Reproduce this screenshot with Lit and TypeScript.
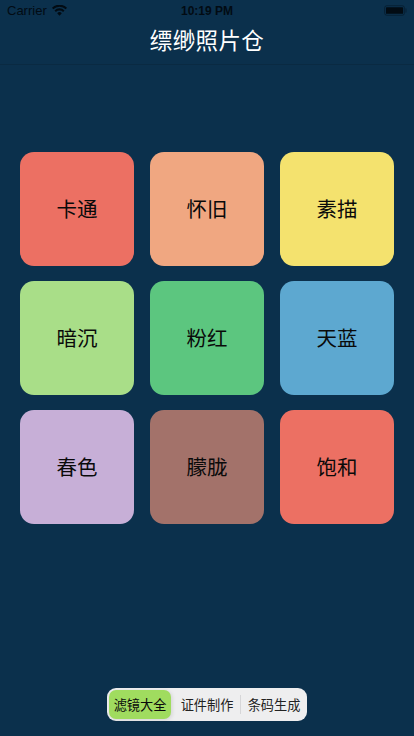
import { LitElement, html, css, svg } from "lit";
import { customElement } from "lit/decorators.js";

const tiles: [string, string][] = [
  ["卡通", "#ec7063"], ["怀旧", "#f0a781"], ["素描", "#f4e26e"],
  ["暗沉", "#a9de88"], ["粉红", "#5cc67f"], ["天蓝", "#5da8d0"],
  ["春色", "#c7afd7"], ["朦胧", "#a3726a"], ["饱和", "#ec7063"],
];

@customElement("app-root")
export class AppRoot extends LitElement {
  static styles = css`
    :host {
      display: flex; flex-direction: column; width: 414px; height: 736px;
      background: #0b304c; overflow: hidden;
      font-family: "Liberation Sans", "Noto Sans CJK SC", sans-serif;
    }
    .status { height: 20px; box-sizing: border-box; padding: 1px 7px 0; display: grid; grid-template-columns: 1fr auto 1fr; align-items: center; color: #020b13; font-size: 13px; }
    .left { display: flex; align-items: center; gap: 5px; }
    .time { font-weight: 700; font-size: 12px; }
    .right { display: flex; justify-content: flex-end; }
    .nav { height: 45px; box-sizing: border-box; display: flex; align-items: center; justify-content: center; border-bottom: 1px solid #0a2a42; color: #fff; font-size: 22.5px; letter-spacing: 0.4px; padding-bottom: 7px; }
    .grid { margin: 87px 20px 0; display: grid; grid-template-columns: repeat(3, 114px); gap: 15px 16px; }
    .tile { height: 114px; box-sizing: border-box; padding-bottom: 2px; border-radius: 14px; display: flex; align-items: center; justify-content: center; color: #0a0a0a; font-size: 20.5px; }
    .spacer { flex: 1; }
    .seg { align-self: center; margin-bottom: 15px; width: 200px; height: 33px; box-sizing: border-box; background: #eeeeef; border-radius: 9px; padding: 2px; display: flex; align-items: stretch; font-size: 13.2px; color: #222; }
    .seg div { display: flex; align-items: center; justify-content: center; white-space: nowrap; }
    .seg .on { width: 62px; background: #a0dc5f; border-radius: 7px; color: #0a0a0a; box-shadow: 1px 1px 4px rgba(0,0,0,.12); }
    .seg .mid { width: 69px; padding-left: 3px; box-sizing: border-box; }
    .seg .last { flex: 1; padding-left: 2px; }
    .seg .sep { width: 1px; margin: 5px 0; background: #d6d6d8; }
  `;

  render() {
    return html`
      <div class="status">
        <div class="left">Carrier
          <svg width="15" height="11" viewBox="0 0 15 11">
            ${svg`<path d="M7.5 10.8 5.2 8.3a3.2 3.2 0 0 1 4.6 0ZM3.9 6.9 2.5 5.4a7 7 0 0 1 10 0L11.1 6.9a5.1 5.1 0 0 0-7.2 0ZM1.3 4.2 0 2.8a10.6 10.6 0 0 1 15 0L13.7 4.2a8.8 8.8 0 0 0-12.4 0Z" fill="#020b13"/>`}
          </svg>
        </div>
        <div class="time">10:19 PM</div>
        <div class="right">
          <svg width="23" height="11" viewBox="0 0 24 11">
            ${svg`<rect x=".5" y=".5" width="21" height="10" rx="2.5" fill="none" stroke="#020b13" stroke-opacity=".4"/><rect x="2" y="2" width="18" height="7" rx="1" fill="#020b13"/><rect x="22.5" y="3.5" width="1" height="4" fill="#020b13" fill-opacity=".4"/>`}
          </svg>
        </div>
      </div>
      <div class="nav">缥缈照片仓</div>
      <div class="grid">
        ${tiles.map(([t, c]) => html`<div class="tile" style="background:${c}">${t}</div>`)}
      </div>
      <div class="spacer"></div>
      <div class="seg">
        <div class="on">滤镜大全</div>
        <div class="mid">证件制作</div>
        <div class="sep"></div>
        <div class="last">条码生成</div>
      </div>
    `;
  }
}
